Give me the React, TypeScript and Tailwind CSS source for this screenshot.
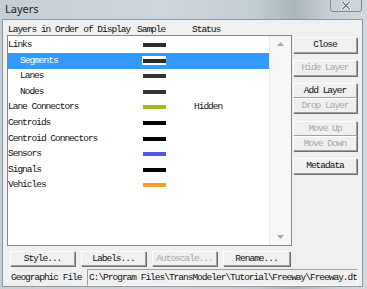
import React from 'react'

type Layer = {
  name: string
  indent?: boolean
  color: string
  status?: string
  selected?: boolean
}

const layers: Layer[] = [
  { name: 'Links', color: '#2b2b2b' },
  { name: 'Segments', indent: true, color: '#2b2b2b', selected: true },
  { name: 'Lanes', indent: true, color: '#333333' },
  { name: 'Nodes', indent: true, color: '#333333' },
  { name: 'Lane Connectors', color: '#9cbd1f', status: 'Hidden' },
  { name: 'Centroids', color: '#000000' },
  { name: 'Centroid Connectors', color: '#000000' },
  { name: 'Sensors', color: '#5656e4' },
  { name: 'Signals', color: '#000000' },
  { name: 'Vehicles', color: '#f4a027' },
]

const mono = "font-['Liberation_Mono',monospace] text-[9.5px] tracking-[-1px] leading-[10px]"

function WinButton({
  label,
  disabled,
  className = '',
}: {
  label: string
  disabled?: boolean
  className?: string
}) {
  return (
    <div
      className={`flex items-center justify-center bg-[#f0f0f0] border border-t-white border-l-white border-r-[#a0a0a0] border-b-[#a0a0a0] shadow-[1px_1px_0_0_#6e6e6e] ${mono} ${
        disabled ? 'text-[#a6a6a6]' : 'text-[#111]'
      } ${className}`}
    >
      {label}
    </div>
  )
}

function LayerRow({ layer }: { layer: Layer }) {
  return (
    <div
      className={`flex items-center h-[15.55px] ${layer.selected ? 'bg-[#3399ff] text-white' : 'text-[#111]'}`}
    >
      <div className={`w-[134px] whitespace-nowrap ${layer.indent ? 'pl-[12px]' : 'pl-0'}`}>
        {layer.name}
      </div>
      <div
        className={`w-[24px] h-[9px] flex items-center justify-center ${layer.selected ? 'bg-white' : ''}`}
      >
        <div className="w-[23px] h-[4px]" style={{ backgroundColor: layer.color }} />
      </div>
      <div className="ml-[28px] whitespace-nowrap">{layer.status ?? ''}</div>
    </div>
  )
}

export default function App() {
  return (
    <div className="w-[367px] h-[289px] overflow-hidden bg-[linear-gradient(90deg,#c4ced5_0%,#cdd6dc_45%,#c2ccd3_70%,#a9b4bb_80%,#c8d1d7_90%,#d2dadf_100%)]">
      {/* title bar */}
      <div className="h-[19px] flex items-start justify-between">
        <div className="pl-[5px] pt-[1px] font-['Noto_Sans',sans-serif] text-[11px] leading-[15px] text-[#1e1e1e]">
          Layers
        </div>
        <div className="mr-[5px] w-[32px] h-[13px] mt-[-1px] rounded-b-[3px] border border-[#7d8a94] bg-[#cbd3d9]/70 flex items-center justify-center">
          <svg width="10" height="9" viewBox="0 0 10 9">
            <path d="M1.5 1 L8.5 8 M8.5 1 L1.5 8" stroke="#ffffff" strokeWidth="3" strokeLinecap="round" />
            <path d="M1.5 1 L8.5 8 M8.5 1 L1.5 8" stroke="#6a7884" strokeWidth="1.4" strokeLinecap="round" />
          </svg>
        </div>
      </div>

      {/* client area */}
      <div className="ml-[2px] w-[361px] h-[268px] border border-[#8c98a1] bg-[#f0f0f0] flex flex-col pl-[4px]">
        {/* column header */}
        <div className={`flex h-[15px] pt-[4.5px] text-[#111] ${mono}`}>
          <div className="w-[130px] pl-[1px]">Layers in Order of Display</div>
          <div className="w-[55px]">Sample</div>
          <div>Status</div>
        </div>

        <div className="flex">
          {/* layer list */}
          <div className="w-[285px] h-[211px] border border-[#828790] bg-white flex">
            <div className={`flex-1 pt-[1.5px] ${mono}`}>
              {layers.map((l) => (
                <LayerRow key={l.name} layer={l} />
              ))}
            </div>
            <div className="w-[22px] bg-[#f7f7f7] border-l border-[#eaeaea] flex flex-col items-center justify-between py-[6px]">
              <svg width="7" height="4" viewBox="0 0 7 4">
                <path d="M0 4 L3.5 0 L7 4 Z" fill="#a8a8a8" />
              </svg>
              <svg width="7" height="4" viewBox="0 0 7 4">
                <path d="M0 0 L3.5 4 L7 0 Z" fill="#a8a8a8" />
              </svg>
            </div>
          </div>

          {/* right buttons */}
          <div className="ml-[1px] w-[64px] flex flex-col">
            <WinButton label="Close" className="mt-[2px] h-[16px]" />
            <WinButton label="Hide Layer" disabled className="mt-[7px] h-[16px]" />
            <WinButton label="Add Layer" className="mt-[7px] h-[15px]" />
            <WinButton label="Drop Layer" disabled className="h-[15px]" />
            <WinButton label="Move Up" disabled className="mt-[8px] h-[15px]" />
            <WinButton label="Move Down" disabled className="h-[15px]" />
            <WinButton label="Metadata" className="mt-[7px] h-[16px]" />
          </div>
        </div>

        {/* bottom buttons */}
        <div className="flex gap-[6px] mt-[5px] ml-[3px]">
          <WinButton label="Style..." className="w-[65px] h-[15px]" />
          <WinButton label="Labels..." className="w-[65px] h-[15px]" />
          <WinButton label="Autoscale..." disabled className="w-[65px] h-[15px]" />
          <WinButton label="Rename..." className="w-[67px] h-[15px]" />
        </div>

        {/* geographic file */}
        <div className={`flex items-center mt-[3px] text-[#111] ${mono}`}>
          <div className="w-[80px] pl-[4px]">Geographic File</div>
          <div className="w-[271px] h-[17px] border border-t-[#a0a0a0] border-l-[#a0a0a0] border-r-white border-b-white flex items-center pl-[1px] whitespace-nowrap overflow-hidden">
            C:\Program Files\TransModeler\Tutorial\Freeway\Freeway.dt
          </div>
        </div>
      </div>
    </div>
  )
}
